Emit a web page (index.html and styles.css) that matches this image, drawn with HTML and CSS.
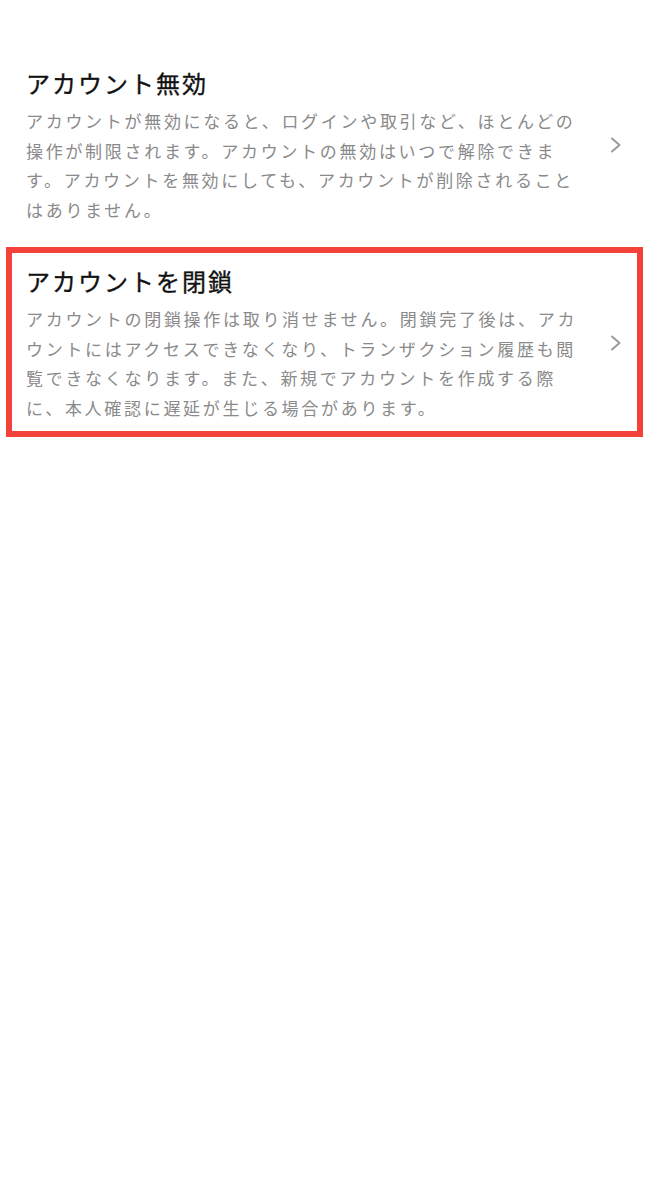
FILE: index.html
```html
<!DOCTYPE html>
<html lang="ja">
<head>
<meta charset="utf-8">
<title>アカウント設定</title>
<link rel="stylesheet" href="styles.css">
</head>
<body>
<main class="list">
  <a class="row" href="#">
    <div class="text">
      <div class="title">アカウント無効</div>
      <div class="desc">アカウントが無効になると、ログインや取引など、ほとんどの操作が制限されます。アカウントの無効はいつで解除できます。アカウントを無効にしても、アカウントが削除されることはありません。</div>
    </div>
    <svg class="chev" viewBox="0 0 12 16" width="12" height="16"><polyline points="2,1.5 9.5,8 2,14.5" fill="none" stroke="#9a9a9a" stroke-width="2" stroke-linecap="round" stroke-linejoin="round"/></svg>
  </a>
  <a class="row highlight" href="#">
    <div class="text">
      <div class="title">アカウントを閉鎖</div>
      <div class="desc">アカウントの閉鎖操作は取り消せません。閉鎖完了後は、アカウントにはアクセスできなくなり、トランザクション履歴も閲覧できなくなります。また、新規でアカウントを作成する際に、本人確認に遅延が生じる場合があります。</div>
    </div>
    <svg class="chev" viewBox="0 0 12 16" width="12" height="16"><polyline points="2,1.5 9.5,8 2,14.5" fill="none" stroke="#9a9a9a" stroke-width="2" stroke-linecap="round" stroke-linejoin="round"/></svg>
  </a>
</main>
</body>
</html>
```

FILE: styles.css
```css
html, body {
  margin: 0;
  padding: 0;
  background: #ffffff;
}

body {
  font-family: "Noto Sans CJK JP", "Noto Sans", sans-serif;
  width: 653px;
  min-height: 1200px;
}

.list {
  display: flex;
  flex-direction: column;
  padding-top: 46px;
}

.row {
  position: relative;
  display: flex;
  align-items: center;
  padding: 20px 31px 20px 26px;
  text-decoration: none;
}

.text {
  display: flex;
  flex-direction: column;
  gap: 6px;
  width: 560px;
}

.title {
  font-size: 24px;
  line-height: 34px;
  letter-spacing: 2px;
  font-weight: 400;
  color: #111111;
  -webkit-text-stroke: 0.35px #111111;
}

.desc {
  font-size: 17px;
  line-height: 29.5px;
  letter-spacing: 2.7px;
  color: #8a8a8a;
}

.chev {
  margin-left: auto;
  flex: 0 0 auto;
}

.highlight::after {
  content: "";
  position: absolute;
  top: 3px;
  bottom: 5px;
  left: 6px;
  right: 10px;
  border: 6px solid #f4413a;
  pointer-events: none;
}
```
